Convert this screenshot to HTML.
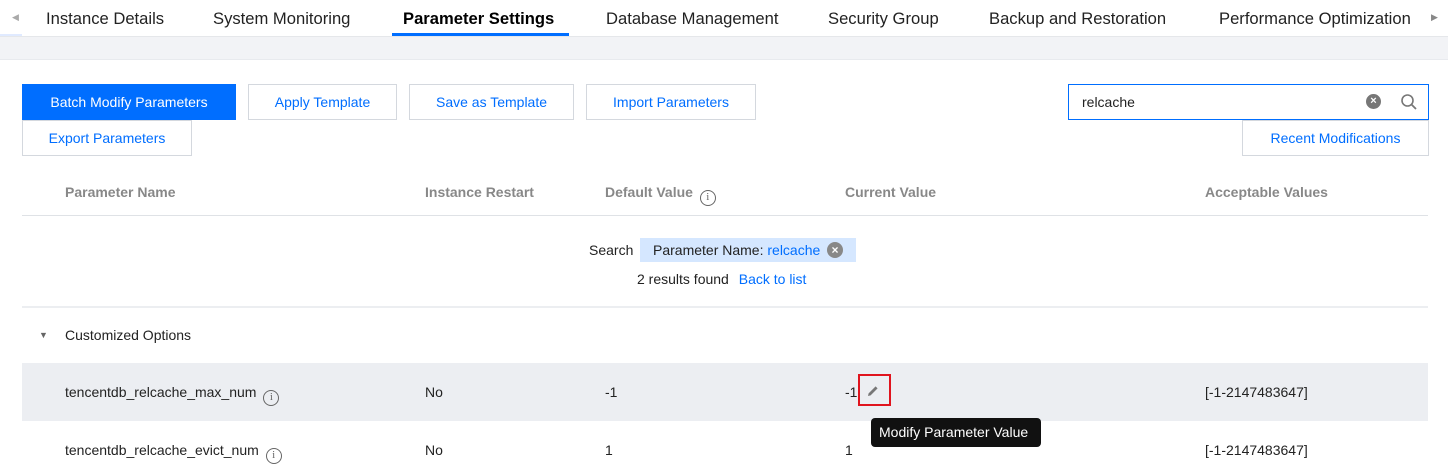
<!DOCTYPE html>
<html><head><style>
*{margin:0;padding:0;box-sizing:border-box}
body{width:1448px;height:466px;overflow:hidden;background:#fff;font-family:"Liberation Sans",sans-serif;font-size:14px;color:#222;position:relative}
.a{position:absolute;white-space:nowrap}
.tab{top:9px;font-size:16.6px;color:#222}
.btn{position:absolute;height:36px;border:1px solid #d4d8de;background:#fff;color:#006eff;font-size:14px;display:flex;align-items:center;justify-content:center}
.th{top:184px;font-size:14px;color:#888;font-weight:bold}
.info{display:inline-block;width:16px;height:16px;border:1.3px solid #666;border-radius:50%;font-size:11px;line-height:13px;text-align:center;color:#666;vertical-align:-3px;font-weight:normal;font-family:"Liberation Serif",serif;margin-left:3px}
</style></head><body>
<div class="a" style="top:12px;left:12px;font-size:9px;color:#aaa">◀</div>
<div class="a" style="top:34px;left:0;width:22px;height:2px;background:#e0eaff"></div>
<div class="a tab" style="left:46px">Instance Details</div>
<div class="a tab" style="left:213px">System Monitoring</div>
<div class="a tab" style="left:403px;font-weight:bold;color:#000">Parameter Settings</div>
<div class="a" style="top:33px;left:392px;width:177px;height:3px;background:#006eff"></div>
<div class="a tab" style="left:606px">Database Management</div>
<div class="a tab" style="left:828px">Security Group</div>
<div class="a tab" style="left:989px">Backup and Restoration</div>
<div class="a tab" style="left:1219px">Performance Optimization</div>
<div class="a" style="top:12px;left:1431px;font-size:9px;color:#888">▶</div>
<div class="a" style="top:36px;left:0;width:1448px;height:24px;background:#f2f3f6;border-top:1px solid #e5e7ea;border-bottom:1px solid #e8eaee"></div>

<div class="btn" style="left:22px;top:84px;width:214px;background:#006eff;border-color:#006eff;color:#fff">Batch Modify Parameters</div>
<div class="btn" style="left:248px;top:84px;width:149px">Apply Template</div>
<div class="btn" style="left:409px;top:84px;width:165px">Save as Template</div>
<div class="btn" style="left:586px;top:84px;width:170px">Import Parameters</div>
<div class="btn" style="left:22px;top:120px;width:170px">Export Parameters</div>
<div class="a" style="left:1068px;top:84px;width:361px;height:36px;border:1px solid #006eff;background:#fff"></div>
<div class="a" style="left:1082px;top:94px;font-size:14px">relcache</div>
<div class="a" style="left:1366px;top:94px;width:15px;height:15px;border-radius:50%;background:#777;color:#fff;font-size:11px;line-height:15px;text-align:center;font-weight:bold">×</div>
<svg class="a" style="left:1400px;top:93px" width="18" height="18" viewBox="0 0 18 18"><circle cx="7.5" cy="7.5" r="5.5" fill="none" stroke="#777" stroke-width="1.6"/><path d="M11.5 11.5L16 16" stroke="#777" stroke-width="1.8"/></svg>
<div class="btn" style="left:1242px;top:120px;width:187px">Recent Modifications</div>

<div class="a th" style="left:65px">Parameter Name</div>
<div class="a th" style="left:425px">Instance Restart</div>
<div class="a th" style="left:605px">Default Value <span class="info">i</span></div>
<div class="a th" style="left:845px">Current Value</div>
<div class="a th" style="left:1205px">Acceptable Values</div>
<div class="a" style="left:22px;top:215px;width:1406px;height:1px;background:#dfe2e6"></div>

<div class="a" style="left:589px;top:242px">Search</div>
<div class="a" style="left:640px;top:238px;width:216px;height:24px;background:#d5e7ff"></div>
<div class="a" style="left:653px;top:242px">Parameter Name: <span style="color:#006eff">relcache</span></div>
<div class="a" style="left:827px;top:242px;width:16px;height:16px;border-radius:50%;background:#888;color:#fff;font-size:12px;line-height:16px;text-align:center;font-weight:bold">×</div>
<div class="a" style="left:637px;top:271px">2 results found <span style="color:#006eff;margin-left:6px">Back to list</span></div>
<div class="a" style="left:22px;top:306px;width:1406px;height:2px;background:#eceef1"></div>

<div class="a" style="left:39px;top:330px;font-size:9px;color:#666">▼</div>
<div class="a" style="left:65px;top:327px">Customized Options</div>

<div class="a" style="left:22px;top:363px;width:1406px;height:58px;background:#eceef2"></div>
<div class="a" style="left:65px;top:384px">tencentdb_relcache_max_num <span class="info">i</span></div>
<div class="a" style="left:425px;top:384px">No</div>
<div class="a" style="left:605px;top:384px">-1</div>
<div class="a" style="left:845px;top:384px">-1</div>
<div class="a" style="left:858px;top:374px;width:33px;height:32px;border:2px solid #e0141e"></div>
<svg class="a" style="left:866px;top:384px" width="14" height="14" viewBox="0 0 14 14"><path d="M2 12L2.6 9.4L9.6 2.4L11.6 4.4L4.6 11.4Z" fill="#777"/></svg>
<div class="a" style="left:1205px;top:384px">[-1-2147483647]</div>

<div class="a" style="left:65px;top:442px">tencentdb_relcache_evict_num <span class="info">i</span></div>
<div class="a" style="left:425px;top:442px">No</div>
<div class="a" style="left:605px;top:442px">1</div>
<div class="a" style="left:845px;top:442px">1</div>
<div class="a" style="left:1205px;top:442px">[-1-2147483647]</div>

<div class="a" style="left:871px;top:418px;width:170px;height:29px;background:#111;border-radius:4px;color:#fff;font-size:14px;line-height:29px;padding-left:8px">Modify Parameter Value</div>
</body></html>
